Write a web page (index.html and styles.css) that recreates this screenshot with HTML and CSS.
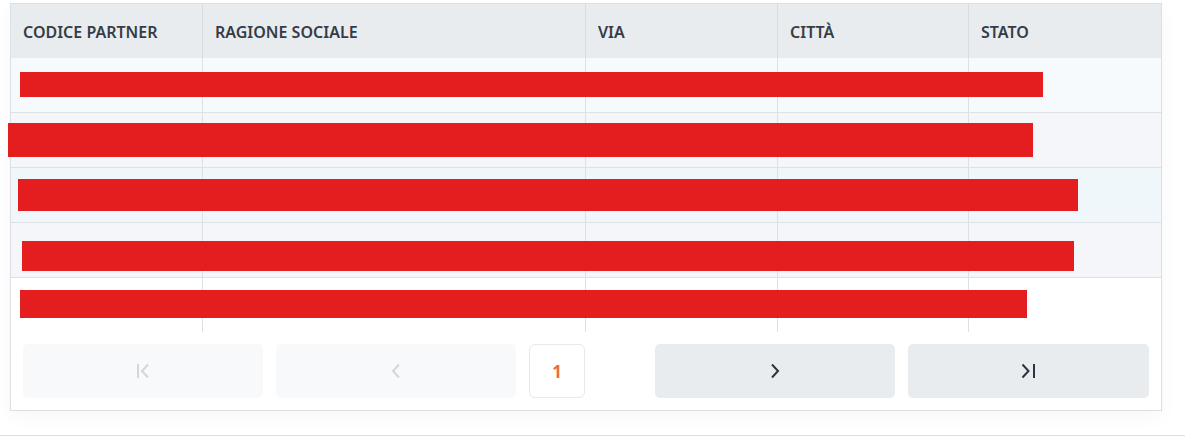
FILE: index.html
```html
<!DOCTYPE html>
<html lang="it">
<head>
    <meta charset="UTF-8">
    <meta name="viewport" content="width=device-width, initial-scale=1.0">
    <title>Partner</title>
    <link rel="stylesheet" href="styles.css">
</head>
<body>

<div class="page">
    <div class="card">
        <!-- Table header -->
        <div class="row head">
            <div class="cell">CODICE PARTNER</div>
            <div class="cell">RAGIONE SOCIALE</div>
            <div class="cell">VIA</div>
            <div class="cell">CITTÀ</div>
            <div class="cell">STATO</div>
        </div>

        <!-- Rows (content redacted) -->
        <div class="row r1"><div class="cell"></div><div class="cell"></div><div class="cell"></div><div class="cell"></div><div class="cell"></div></div>
        <div class="row r2"><div class="cell"></div><div class="cell"></div><div class="cell"></div><div class="cell"></div><div class="cell"></div></div>
        <div class="row r3"><div class="cell"></div><div class="cell"></div><div class="cell"></div><div class="cell"></div><div class="cell"></div></div>
        <div class="row r4"><div class="cell"></div><div class="cell"></div><div class="cell"></div><div class="cell"></div><div class="cell"></div></div>
        <div class="row r5 last"><div class="cell"></div><div class="cell"></div><div class="cell"></div><div class="cell"></div><div class="cell"></div></div>

        <!-- Pagination -->
        <div class="pager">
            <button class="pg-btn" disabled aria-label="Prima">
                <svg width="14" height="16" viewBox="0 0 14 16"><path d="M2 1v14" stroke="currentColor" stroke-width="2" fill="none"/><path d="M12 1.5 6 8l6 6.5" stroke="currentColor" stroke-width="2" fill="none"/></svg>
            </button>
            <button class="pg-btn" disabled aria-label="Precedente">
                <svg width="10" height="16" viewBox="0 0 10 16"><path d="M8 1.5 2 8l6 6.5" stroke="currentColor" stroke-width="2" fill="none"/></svg>
            </button>
            <div class="pg-center">
                <span class="pg-num">1</span>
            </div>
            <button class="pg-btn active" aria-label="Successiva">
                <svg width="10" height="16" viewBox="0 0 10 16"><path d="M2 1.5 8 8l-6 6.5" stroke="currentColor" stroke-width="2" fill="none"/></svg>
            </button>
            <button class="pg-btn active" aria-label="Ultima">
                <svg width="16" height="16" viewBox="0 0 16 16"><path d="M1.5 1.5 7.5 8l-6 6.5" stroke="currentColor" stroke-width="2" fill="none"/><path d="M13 1v14" stroke="currentColor" stroke-width="2" fill="none"/></svg>
            </button>
        </div>
    </div>
</div>
<div class="bottom-line"></div>

<!-- Redaction bars -->
<div class="redact" style="left:20px;top:72px;width:1023px;height:25px"></div>
<div class="redact" style="left:8px;top:123px;width:1025px;height:34px"></div>
<div class="redact" style="left:18px;top:179px;width:1060px;height:32px"></div>
<div class="redact" style="left:22px;top:241px;width:1052px;height:30px"></div>
<div class="redact" style="left:20px;top:290px;width:1007px;height:28px"></div>

</body>
</html>
```

FILE: styles.css
```css
body {
    margin: 0;
    font-family: "Noto Sans", Arial, sans-serif;
    background-color: #ffffff;
    color: #343a40;
}
.page {
    padding: 3px 23px 0 10px;
}
.card {
    border: 1px solid #dcdfe3;
    background-color: #fff;
    box-shadow: 0 6px 18px rgba(0, 0, 0, 0.035);
}
.row {
    display: grid;
    grid-template-columns: 191px 383px 192px 191px 1fr;
    height: 54px;
    border-bottom: 1px solid #dde1e6;
}
.row.last {
    border-bottom: none;
}
.cell + .cell {
    border-left: 1px solid #dde1e6;
}
.head {
    background-color: #e9ecef;
    border-bottom: none;
}
.head .cell {
    display: flex;
    align-items: center;
    padding: 0 12px;
    font-size: 16px;
    font-weight: 600;
    color: #363c45;
    padding-top: 1px;
}
.head .cell + .cell {
    border-left-color: #d8dce1;
}
.r1 { background-color: #f7fafd; }
.r2 { background-color: #f4f6fa; }
.r3 { background-color: #eff7fb; }
.r4 { background-color: #f4f6fa; }
.r5 { background-color: #ffffff; }

/* Pagination */
.pager {
    display: grid;
    grid-template-columns: 240px 240px 113px 240px 241px;
    gap: 13px;
    padding: 12px 12px 12px 12px;
}
.pg-btn {
    height: 54px;
    border: none;
    border-radius: 5px;
    background-color: #f8f9fa;
    color: #d4d6d8;
    display: flex;
    align-items: center;
    justify-content: center;
    padding: 0;
    cursor: pointer;
}
.pg-btn.active {
    background-color: #e9ecef;
    color: #2b3540;
}
.pg-center {
    display: flex;
    align-items: stretch;
}
.pg-num {
    width: 54px;
    border: 1px solid #e7e9ec;
    border-radius: 6px;
    display: flex;
    align-items: center;
    justify-content: center;
    font-size: 17px;
    font-weight: 700;
    color: #f26b38;
}
.bottom-line {
    margin-top: 24px;
    border-top: 1px solid #dcdfe3;
}
.redact {
    position: absolute;
    background-color: #e41e1e;
}
```
